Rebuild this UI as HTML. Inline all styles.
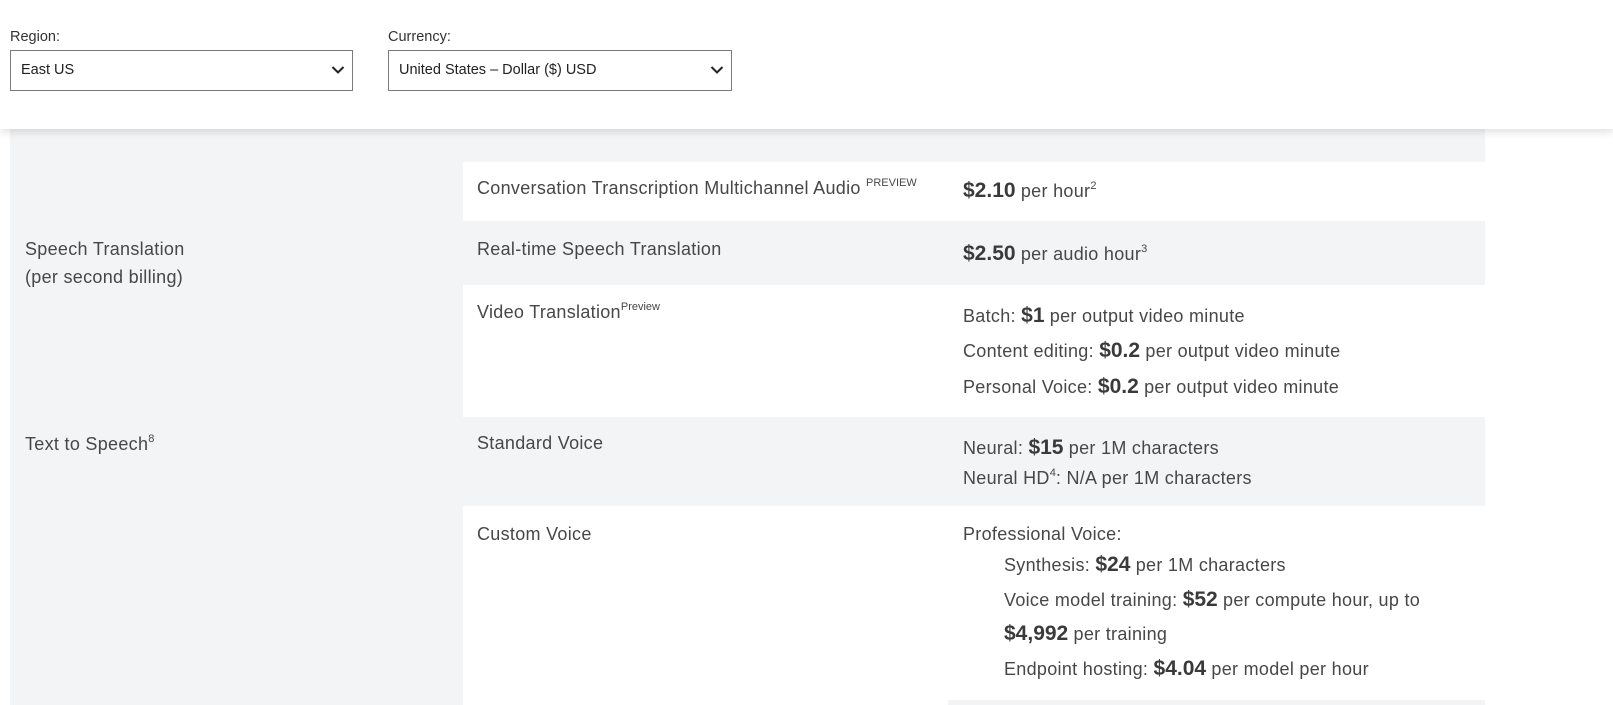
<!DOCTYPE html>
<html><head><meta charset="utf-8"><style>
*{margin:0;padding:0;box-sizing:border-box}
body{width:1613px;height:705px;overflow:hidden;background:#fff;font-family:"Segoe UI","Liberation Sans",sans-serif;color:#3b3b3b;position:relative}
.a{position:absolute;white-space:nowrap;line-height:1.2}
.hdr{position:absolute;left:0;top:0;width:1613px;height:129px;background:#fff;box-shadow:0 3px 8px rgba(0,0,0,.13);z-index:2}
.lbl{font-size:14.5px;color:#333}
.sel{position:absolute;height:41px;border:1px solid #7a7a7a;background:#fff;font-size:14.5px;color:#222;padding:11px 10px}
.sel svg{position:absolute;right:7px;top:14px}
.panel{position:absolute;left:10px;top:129px;width:1475px;height:576px;background:#f3f4f6}
.w{position:absolute;background:#fff;left:463px;width:1022px}
.t{font-size:18px;letter-spacing:0.3px;color:#474747;margin-top:-1px}
b{font-size:21px;font-weight:bold;color:#3a3a3a;letter-spacing:0}
sup{font-size:11px;vertical-align:8px;letter-spacing:0}
</style></head><body>
<div class="hdr">
<div class="a lbl" style="left:10px;top:29px">Region:</div>
<div class="sel" style="left:10px;top:50px;width:343px">East US<svg width="14" height="10" viewBox="0 0 14 10"><path d="M1.5 2 L7 7.5 L12.5 2" fill="none" stroke="#222" stroke-width="2"/></svg></div>
<div class="a lbl" style="left:388px;top:29px">Currency:</div>
<div class="sel" style="left:388px;top:50px;width:344px">United States – Dollar ($) USD<svg width="14" height="10" viewBox="0 0 14 10"><path d="M1.5 2 L7 7.5 L12.5 2" fill="none" stroke="#222" stroke-width="2"/></svg></div>
</div>
<div class="panel"></div>
<div class="w" style="top:162px;height:59px"></div>
<div class="w" style="top:285px;height:132px"></div>
<div class="w" style="top:506px;height:194px"></div>
<div class="a" style="left:463px;top:700px;width:485px;height:5px;background:#fff"></div>

<div class="a t" style="left:25px;top:240px">Speech Translation</div>
<div class="a t" style="left:25px;top:268px">(per second billing)</div>
<div class="a t" style="left:25px;top:434px">Text to Speech<sup>8</sup></div>

<div class="a t" style="left:477px;top:178px">Conversation Transcription Multichannel Audio <sup>PREVIEW</sup></div>
<div class="a t" style="left:963px;top:179px"><b>$2.10</b> per hour<sup>2</sup></div>
<div class="a t" style="left:477px;top:240px">Real-time Speech Translation</div>
<div class="a t" style="left:963px;top:242px"><b>$2.50</b> per audio hour<sup>3</sup></div>
<div class="a t" style="left:477px;top:302px">Video Translation<sup>Preview</sup></div>
<div class="a t" style="left:963px;top:304px">Batch: <b>$1</b> per output video minute</div>
<div class="a t" style="left:963px;top:339px">Content editing: <b>$0.2</b> per output video minute</div>
<div class="a t" style="left:963px;top:375px">Personal Voice: <b>$0.2</b> per output video minute</div>

<div class="a t" style="left:477px;top:434px">Standard Voice</div>
<div class="a t" style="left:963px;top:436px">Neural: <b>$15</b> per 1M characters</div>
<div class="a t" style="left:963px;top:468px">Neural HD<sup>4</sup>: N/A per 1M characters</div>

<div class="a t" style="left:477px;top:525px">Custom Voice</div>
<div class="a t" style="left:963px;top:525px">Professional Voice:</div>
<div class="a t" style="left:1004px;top:553px">Synthesis: <b>$24</b> per 1M characters</div>
<div class="a t" style="left:1004px;top:588px">Voice model training: <b>$52</b> per compute hour, up to</div>
<div class="a t" style="left:1004px;top:622px"><b>$4,992</b> per training</div>
<div class="a t" style="left:1004px;top:657px">Endpoint hosting: <b>$4.04</b> per model per hour</div>
</body></html>
